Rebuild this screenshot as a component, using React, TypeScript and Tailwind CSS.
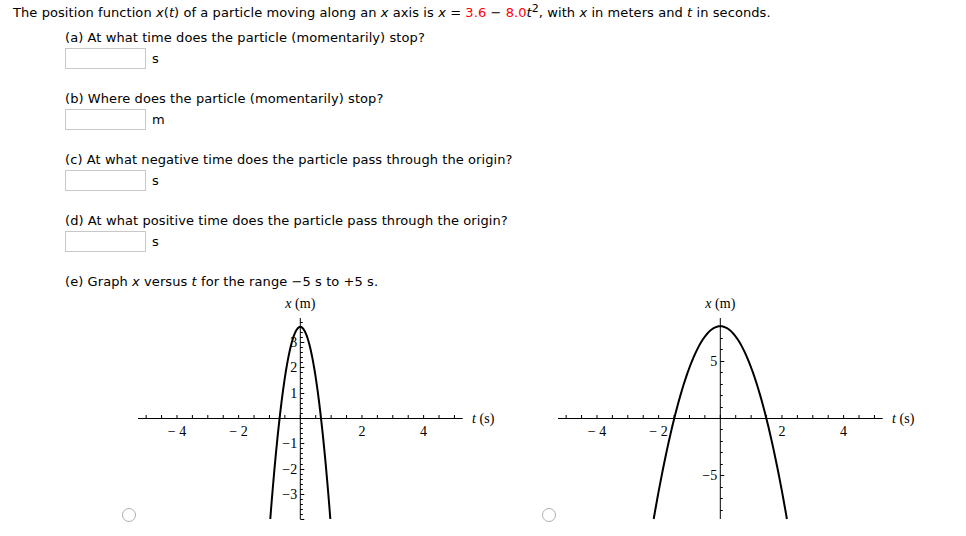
const SX = 30.83;
const OX = 164.3;
const OY = 128;
const TOP = 28;
const BOTTOM = 229;

function curvePath(a: number, b: number, sy: number) {
    // x = a - b t^2, clipped at the bottom of the axis
    const vMin = (OY - BOTTOM) / sy;
    const tMax = Math.sqrt((a - vMin) / b);
    const pts: string[] = [];
    for (let i = 0; i <= 80; i++) {
        const t = -tMax + (2 * tMax * i) / 80;
        const v = a - b * t * t;
        pts.push(`${(OX + t * SX).toFixed(2)},${(OY - v * sy).toFixed(2)}`);
    }
    return "M" + pts.join(" L");
}

interface GraphProps {
    width: number;
    a: number;
    b: number;
    sy: number;
    yStep: number;
    yMin: number;
    yMax: number;
    majorEvery: number;
    yLabels: number[];
}

function Graph({ width, a, b, sy, yStep, yMin, yMax, majorEvery, yLabels }: GraphProps) {
    const xTicks: number[] = [];
    for (let t = -5; t <= 5.001; t += 0.5) xTicks.push(t);
    const yTicks: number[] = [];
    for (let v = yMin; v <= yMax + 0.001; v += yStep) yTicks.push(Math.round(v * 10) / 10);

    return (
        <svg width={width} height={246} viewBox={`0 0 ${width} 246`} className="block">
            <g fontFamily="'Liberation Serif', 'Times New Roman', serif" fontSize="14" fill="#000">
                <text x={OX} y={18} textAnchor="middle">
                    <tspan fontStyle="italic">x</tspan> (m)
                </text>
                <text x={336} y={133}>
                    <tspan fontStyle="italic">t</tspan> (s)
                </text>
                {[-4, -2, 2, 4].map((t) => (
                    <text key={t} x={OX + t * SX} y={146} textAnchor="middle">
                        {t < 0 ? `\u2212 ${-t}` : t}
                    </text>
                ))}
                {yLabels.map((v) => (
                    <text key={v} x={OX - 3} y={OY - v * sy + 5} textAnchor="end">
                        {v < 0 ? `\u2212${-v}` : v}
                    </text>
                ))}
            </g>
            <g stroke="#000" strokeWidth="1" fill="none">
                <line x1={2} y1={OY + 0.5} x2={326.7} y2={OY + 0.5} />
                <line x1={OX} y1={TOP} x2={OX} y2={BOTTOM} />
                {xTicks.map((t) => (
                    <line key={t} x1={OX + t * SX} y1={OY - 3} x2={OX + t * SX} y2={OY} />
                ))}
                {yTicks.map((v) => {
                    const major = Math.abs(v / majorEvery - Math.round(v / majorEvery)) < 0.01;
                    const y = Math.round(OY - v * sy) + 0.5;
                    return (
                        <line key={v} x1={OX} y1={y} x2={OX + (major ? 4 : 2.5)} y2={y} />
                    );
                })}
                <path d={curvePath(a, b, sy)} strokeWidth="2" />
            </g>
        </svg>
    );
}

function Question({ label, unit }: { label: string; unit: string }) {
    return (
        <div className="pl-[65px] h-[61px]">
            <div className="h-[16px] leading-[16px]">{label}</div>
            <div className="mt-[2px] flex items-center h-[21px]">
                <input
                    type="text"
                    className="w-[81px] h-[21px] border border-[#c8c8c8] bg-white outline-none"
                />
                <span className="ml-[6px]">{unit}</span>
            </div>
        </div>
    );
}

export default function App() {
    return (
        <div
            className="h-[536px] overflow-hidden bg-white text-[13px] text-black tracking-[0.08px]"
            style={{ fontFamily: "Verdana, 'DejaVu Sans', sans-serif" }}
        >
            <div className="pl-[13px] pt-[5px] h-[30px] leading-[16px]">
                The position function <i>x</i>(<i>t</i>) of a particle moving along an <i>x</i> axis is{" "}
                <i>x</i> = <span className="text-[#ff0000]">3.6</span> &minus;{" "}
                <span className="text-[#ff0000]">8.0</span>
                <i>t</i>
                <sup className="text-[11px]">2</sup>, with <i>x</i> in meters and <i>t</i> in seconds.
            </div>
            <Question label="(a) At what time does the particle (momentarily) stop?" unit="s" />
            <Question label="(b) Where does the particle (momentarily) stop?" unit="m" />
            <Question label="(c) At what negative time does the particle pass through the origin?" unit="s" />
            <Question label="(d) At what positive time does the particle pass through the origin?" unit="s" />
            <div className="pl-[65px] h-[16px] leading-[16px]">
                (e) Graph <i>x</i> versus <i>t</i> for the range &minus;5 s to +5 s.
            </div>
            <div className="flex pl-[122px]">
                <label className="flex items-end">
                    <input
                        type="radio"
                        name="graph"
                        className="appearance-none w-[14px] h-[14px] mb-[14px] rounded-full border border-[#b0b0b0] bg-white"
                    />
                    <Graph
                        width={374}
                        a={3.6}
                        b={8}
                        sy={25.3}
                        yStep={0.2}
                        yMin={-4}
                        yMax={3.8}
                        majorEvery={1}
                        yLabels={[-3, -2, -1, 1, 2, 3]}
                    />
                </label>
                <label className="flex items-end ml-[32px]">
                    <input
                        type="radio"
                        name="graph"
                        className="appearance-none w-[14px] h-[14px] mb-[14px] rounded-full border border-[#b0b0b0] bg-white"
                    />
                    <Graph
                        width={400}
                        a={8}
                        b={3.6}
                        sy={11.47}
                        yStep={1}
                        yMin={-8}
                        yMax={8}
                        majorEvery={5}
                        yLabels={[-5, 5]}
                    />
                </label>
            </div>
        </div>
    );
}
